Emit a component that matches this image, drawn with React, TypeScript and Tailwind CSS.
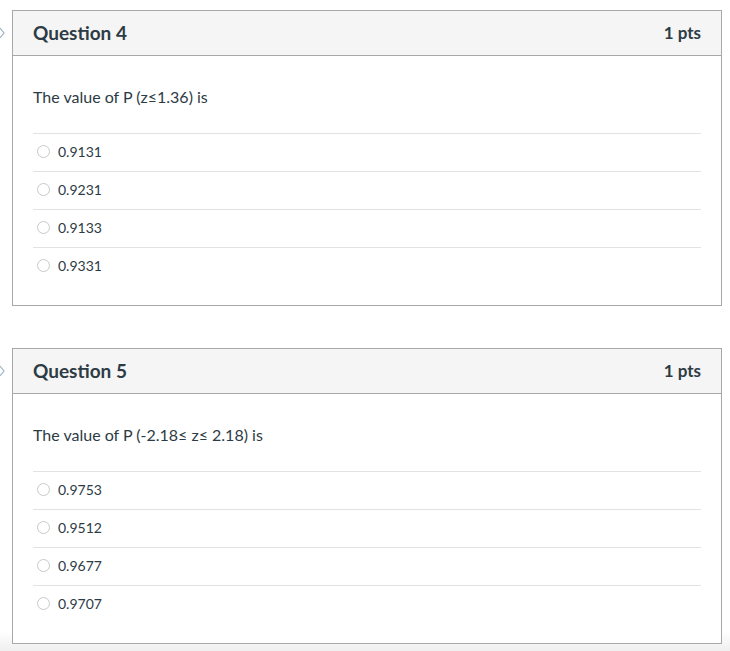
import React from "react";

const questions = [
  { n: 4, text: "The value of P (z≤1.36) is", answers: ["0.9131", "0.9231", "0.9133", "0.9331"] },
  { n: 5, text: "The value of P (-2.18≤ z≤ 2.18) is", answers: ["0.9753", "0.9512", "0.9677", "0.9707"] },
];

function Card({ q }: { q: (typeof questions)[number] }) {
  return (
    <div className="relative">
      <svg className="absolute left-[-12px] top-[17px]" width="5" height="12" viewBox="0 0 5 12">
        <path d="M0 1 L4 6 L0 11" fill="none" stroke="#9fb3c4" strokeWidth="1.2" />
      </svg>
      <div className="w-[710px] border border-[#a8a8a8] bg-white">
        <div className="flex h-[45px] items-center justify-between border-b border-[#a8a8a8] bg-[#f5f5f5] pl-[20px] pr-[20px]">
          <span className="text-[19px] font-bold text-[#2d3b45]">Question {q.n}</span>
          <span className="text-[17px] font-bold text-[#2d3b45]">1 pts</span>
        </div>
        <div className="px-[20px] pt-[31px] pb-[20px]">
          <p className="mb-[26px] text-[16px] leading-[20px] text-[#2d3b45]">{q.text}</p>
          <div>
            {q.answers.map((a) => (
              <div key={a} className="flex h-[38px] items-center border-t border-[#e2e2e2] pb-[3px] pl-[4px]">
                <span className="mr-[8px] h-[13px] w-[13px] rounded-full border border-[#c8c8c8] bg-white" />
                <span className="text-[14px] text-[#2d3b45]">{a}</span>
              </div>
            ))}
          </div>
        </div>
      </div>
    </div>
  );
}

export default function App() {
  return (
    <div
      className="min-h-[651px] w-[730px] bg-gradient-to-b from-white from-[97%] to-[#efefef] pl-[12px] pt-[10px]"
      style={{ fontFamily: "Lato, 'Open Sans', sans-serif" }}
    >
      <div className="flex flex-col gap-[42px]">
        {questions.map((q) => (
          <Card key={q.n} q={q} />
        ))}
      </div>
    </div>
  );
}
